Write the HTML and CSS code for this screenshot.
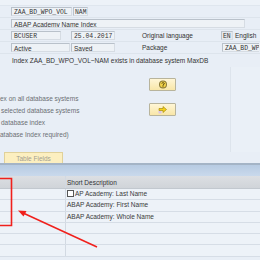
FILE: index.html
```html
<!DOCTYPE html>
<html lang="en">

<head>
    <meta charset="UTF-8">
    <title>Index ZAA_BD_WPO_VOL~NAM</title>
    <link rel="stylesheet" href="styles.css">
</head>

<body>
    <div class="screen">
        <div class="top-band"></div>

        <!-- header fields -->
        <div class="form">
            <div class="form-row">
                <span class="field mono w-name">ZAA_BD_WPO_VOL</span>
                <span class="field mono w-id">NAM</span>
            </div>
            <div class="form-row">
                <span class="field w-desc">ABAP Academy Name Index</span>
            </div>
            <div class="form-row">
                <span class="field mono w-user">BCUSER</span>
                <span class="field mono w-date">25.04.2017</span>
                <span class="label">Original language</span>
                <span class="field mono w-lang">EN</span>
                <span class="text">English</span>
            </div>
            <div class="form-row">
                <span class="field w-status">Active</span>
                <span class="field w-saved">Saved</span>
                <span class="label">Package</span>
                <span class="field mono w-pkg">ZAA_BD_WP</span>
            </div>
            <div class="form-row message">
                Index ZAA_BD_WPO_VOL~NAM exists in database system MaxDB
            </div>
        </div>

        <!-- database options -->
        <div class="options">
            <div class="options-main">
                <div class="option-list">
                    <div class="option">ex on all database systems</div>
                    <div class="option">selected database systems</div>
                    <div class="option">database index</div>
                    <div class="option">atabase Index required)</div>
                </div>
                <div class="option-buttons">
                    <button class="sap-btn">
                        <svg width="10" height="9" viewBox="0 0 10 9">
                            <circle cx="5" cy="4.5" r="4" fill="#8a7a3a" />
                            <circle cx="5" cy="4.5" r="3" fill="#f2d34a" />
                            <path d="M3.6 3.4 Q5 1.8 6.4 3.4 Q6.4 4.3 5 5 L5 5.8" fill="none" stroke="#5a4a10" stroke-width="1" />
                            <rect x="4.5" y="6.3" width="1" height="1" fill="#5a4a10" />
                        </svg>
                    </button>
                    <button class="sap-btn">
                        <svg width="10" height="9" viewBox="0 0 10 9">
                            <path d="M1 3.5 H5 V1.5 L8.5 4.5 L5 7.5 V5.5 H1 Z" fill="#f5d21a" stroke="#9a7e00" stroke-width="0.6" />
                            <rect x="0.5" y="6" width="3" height="2.5" fill="#d9c4e8" />
                        </svg>
                    </button>
                </div>
            </div>
            <div class="options-side"></div>
        </div>

        <div class="tabs">
            <span class="tab">Table Fields</span>
        </div>
        <div class="blue-bar"></div>

        <!-- field table -->
        <div class="table">
            <div class="trow thead">
                <div class="cell c-sel"></div>
                <div class="cell c-desc">Short Description</div>
            </div>
            <div class="trow">
                <div class="cell c-sel"></div>
                <div class="cell c-desc"><span class="cursor-box"></span>AP Academy: Last Name</div>
            </div>
            <div class="trow">
                <div class="cell c-sel"></div>
                <div class="cell c-desc">ABAP Academy: First Name</div>
            </div>
            <div class="trow">
                <div class="cell c-sel"></div>
                <div class="cell c-desc">ABAP Academy: Whole Name</div>
            </div>
            <div class="trow"><div class="cell c-sel"></div><div class="cell c-desc"></div></div>
            <div class="trow"><div class="cell c-sel"></div><div class="cell c-desc"></div></div>
            <div class="trow"><div class="cell c-sel"></div><div class="cell c-desc"></div></div>
        </div>

        <!-- annotation drawn on top of the screenshot -->
        <svg class="annotation" width="260" height="260" viewBox="0 0 260 260">
            <path d="M0 178.5 H11.5 V225.5 H0" fill="none" stroke="#f0201c" stroke-width="1.6" />
            <line x1="97" y1="247" x2="22" y2="212.5" stroke="#f0201c" stroke-width="1.5" />
            <path d="M18 210.5 L26.5 211 L23.5 216.5 Z" fill="#f0201c" />
        </svg>
    </div>
</body>

</html>
```

FILE: styles.css
```css
body,
html {
    margin: 0;
    padding: 0;
}

/* whole SAP screen */
.screen {
    position: relative;
    width: 260px;
    height: 260px;
    overflow: hidden;
    background: #e8eef6;
    font-family: "Liberation Sans", Arial, sans-serif;
    font-size: 6.5px;
    color: #333;
}

.top-band {
    height: 6px;
    background: #edf2f8;
    border-bottom: 1px solid #dfe6ee;
    box-sizing: border-box;
}

/* header fields */
.form-row {
    display: flex;
    align-items: center;
    height: 12px;
    padding-left: 11px;
    border-bottom: 1px solid #dde4ec;
    box-sizing: border-box;
}

.field {
    display: inline-block;
    flex-shrink: 0;
    height: 9px;
    line-height: 9px;
    padding: 0 2px;
    box-sizing: border-box;
    background: #eef2f6;
    border: 1px solid #b9c1ca;
    border-right-color: #d6dce3;
    border-bottom-color: #d6dce3;
    white-space: nowrap;
    overflow: hidden;
    color: #333;
}

.mono {
    font-family: "Liberation Mono", "DejaVu Sans Mono", monospace;
    font-size: 6.4px;
}

.w-name { width: 61px; }
.w-id { width: 15px; margin-left: 1px; padding: 0 1px; }
.w-desc { width: 234px; }
.w-user { width: 50px; }
.w-date { width: 44px; margin-left: 10px; }
.w-lang { width: 12px; margin-left: 22px; padding: 0 1px; background: #e4e8ec; }
.w-status { width: 59px; }
.w-saved { width: 44px; margin-left: 1px; }
.w-pkg { width: 37px; margin-left: 23px; border-right: none; padding-right: 0; }

.label {
    flex-shrink: 0;
    margin-left: 27px;
    width: 57px;
}

.text {
    margin-left: 2px;
}

.message {
    height: 13px;
    padding-left: 12px;
    border-bottom: none;
}

/* database options area */
.options {
    display: flex;
    height: 85px;
}

.options-main {
    display: flex;
    width: 230px;
}

.options-side {
    flex: 1;
    border-left: 1px solid #dde4ec;
    background: #eaf0f7;
}

.option-list {
    width: 149px;
    padding-top: 26px;
    color: #6b6f74;
}

.option {
    height: 12px;
    line-height: 12px;
    white-space: nowrap;
}

.option:nth-child(2) { padding-left: 1px; }
.option:nth-child(3) { padding-left: 1px; }

.option-buttons {
    display: flex;
    flex-direction: column;
    gap: 12px;
    padding-top: 11px;
}

.sap-btn {
    display: flex;
    align-items: center;
    justify-content: center;
    width: 27px;
    height: 13px;
    padding: 0;
    border: 1px solid #b8b49c;
    border-radius: 1px;
    background: linear-gradient(#fff6d6, #f8e6a8);
}

/* tab strip */
.tabs {
    height: 11px;
    padding-left: 4px;
}

.tab {
    display: inline-block;
    width: 59px;
    height: 11px;
    line-height: 11px;
    text-align: center;
    box-sizing: border-box;
    background: #fcefc0;
    border: 1px solid #e0d19a;
    border-bottom: none;
    color: #a39f90;
}

.blue-bar {
    height: 13px;
    box-sizing: border-box;
    border-top: 2px solid #a4b4c6;
    background: linear-gradient(#b7cbe2, #c9d9ec);
}

/* field table */
.trow {
    display: flex;
    height: 11.3px;
    border-bottom: 1px solid #d6dde6;
    box-sizing: border-box;
    background: #edf2f8;
}

.thead {
    height: 13px;
    background: linear-gradient(#dcdfe3, #d0d4d9);
    border-bottom: 1px solid #c2c8cf;
}

.cell {
    line-height: 10px;
    white-space: nowrap;
    overflow: hidden;
}

.c-sel {
    width: 65px;
    border-right: 1px solid #d2d9e2;
}

.c-desc {
    flex: 1;
    padding-left: 1px;
    color: #3a3a3a;
}

.thead .c-desc {
    line-height: 13px;
    color: #333;
}

.cursor-box {
    display: inline-block;
    width: 5px;
    height: 5px;
    margin-right: 1px;
    border: 1px solid #555;
    background: #fff;
    vertical-align: -1px;
}

.annotation {
    position: absolute;
    left: 0;
    top: 0;
    pointer-events: none;
}
```
